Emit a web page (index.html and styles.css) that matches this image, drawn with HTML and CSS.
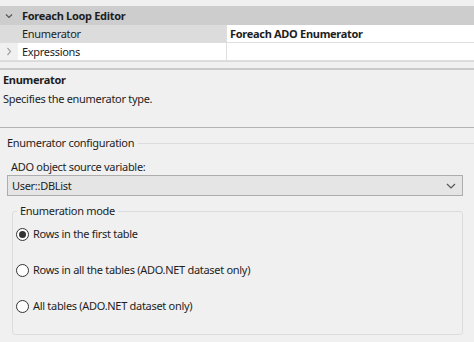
FILE: index.html
```html
<!DOCTYPE html>
<html lang="en">
  <head>
    <meta charset="UTF-8" />
    <title>Foreach Loop Editor</title>
    <link rel="stylesheet" href="styles.css">
  </head>

  <body>
    <div class="grid">
      <div class="grid-header">
        <span class="toggle">
          <svg width="8" height="6" viewBox="0 0 8 6"><path d="M1 1.5 L4 4.5 L7 1.5" fill="none" stroke="#555" stroke-width="1.2"/></svg>
        </span>
        <span class="header-text">Foreach Loop Editor</span>
      </div>
      <div class="grid-row selected">
        <span class="toggle"></span>
        <span class="name">Enumerator</span>
        <span class="value bold">Foreach ADO Enumerator</span>
      </div>
      <div class="grid-row">
        <span class="toggle light">
          <svg width="6" height="9" viewBox="0 0 6 9"><path d="M1.5 1 L4.5 4.5 L1.5 8" fill="none" stroke="#a0a0a0" stroke-width="1.2"/></svg>
        </span>
        <span class="name">Expressions</span>
        <span class="value"></span>
      </div>
    </div>

    <div class="desc">
      <div class="desc-title">Enumerator</div>
      <div class="desc-text">Specifies the enumerator type.</div>
    </div>

    <fieldset class="config">
      <legend>Enumerator configuration</legend>
      <div class="label">ADO object source variable:</div>
      <div class="combo">
        <span>User::DBList</span>
        <svg width="10" height="6" viewBox="0 0 10 6"><path d="M1 1 L5 5 L9 1" fill="none" stroke="#555" stroke-width="1.2"/></svg>
      </div>

      <fieldset class="mode">
        <legend>Enumeration mode</legend>
        <div class="radio-row">
          <span class="radio checked"></span>
          Rows in the first table
        </div>
        <div class="radio-row">
          <span class="radio"></span>
          Rows in all the tables (ADO.NET dataset only)
        </div>
        <div class="radio-row">
          <span class="radio"></span>
          All tables (ADO.NET dataset only)
        </div>
      </fieldset>
    </fieldset>
  </body>
</html>
```

FILE: styles.css
```css
body {
  margin: 0;
  background-color: #f0f0f0;
  font-family: "Noto Sans", "Open Sans", sans-serif;
  font-size: 11px;
  letter-spacing: -0.3px;
  line-height: 16px;
  color: #1e1e1e;
}

.bold {
  font-weight: bold;
}

/* property grid */
.grid {
  padding-top: 6px;
  border-bottom: 1px solid #dadada;
}

.grid-header {
  display: flex;
  align-items: center;
  height: 19px;
  background-color: #cdcdcd;
  font-weight: bold;
}

.toggle {
  display: flex;
  align-items: center;
  justify-content: center;
  width: 18px;
  height: 100%;
  flex-shrink: 0;
}

.header-text {
  padding-left: 4px;
}

.grid-row {
  display: flex;
  height: 17px;
  border-bottom: 1px solid #dedede;
  background-color: #ffffff;
}

.grid-row.selected .toggle,
.grid-row.selected .name {
  background-color: #dcdcdc;
}

.toggle.light {
  background-color: #f0f0f0;
}

.name {
  display: flex;
  align-items: center;
  width: 204px;
  padding-left: 4px;
  border-right: 1px solid #dedede;
}

.value {
  display: flex;
  align-items: center;
  flex: 1;
  padding-left: 3px;
}

/* description panel */
.desc {
  margin-top: 6px;
  border-top: 2px solid #c9c9c9;
  border-bottom: 1px solid #b4b4b4;
  padding: 2px 3px 20px;
}

.desc-title {
  font-weight: bold;
}

.desc-text {
  margin-top: 3px;
}

/* enumerator configuration */
.config {
  margin: 7px 0 0;
  padding: 0;
  border: none;
  border-top: 1px solid #dcdcdc;
}

.config > legend {
  padding: 0 4px 0 7px;
}

.label {
  margin-top: 8px;
  padding-left: 11px;
}

.combo {
  display: flex;
  align-items: center;
  justify-content: space-between;
  box-sizing: border-box;
  height: 21px;
  margin: 0 11px 0 7px;
  padding: 0 6px 0 4px;
  background-color: #e5e5e5;
  border: 1px solid #adadad;
}

.mode {
  margin: 7px 11px 0 12px;
  padding: 7px 0 20px 3px;
  border: 1px solid #dcdcdc;
  border-radius: 3px;
}

.mode > legend {
  padding: 0 3px;
  margin-left: 1px;
}

.radio-row {
  display: flex;
  align-items: center;
  gap: 4px;
  margin-top: 20px;
}

.radio-row:first-of-type {
  margin-top: 0;
}

.radio {
  box-sizing: border-box;
  display: flex;
  align-items: center;
  justify-content: center;
  width: 13px;
  height: 13px;
  border: 1px solid #333333;
  border-radius: 50%;
  background-color: #ffffff;
}

.radio.checked::after {
  content: "";
  width: 7px;
  height: 7px;
  border-radius: 50%;
  background-color: #333333;
}
```
